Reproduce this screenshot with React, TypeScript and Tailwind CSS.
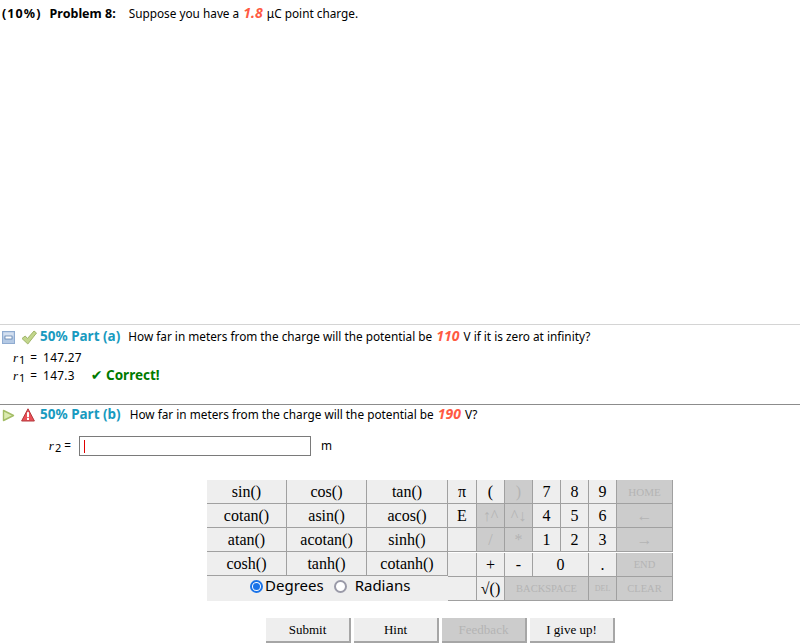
import React from "react";

const SANS = "font-['Noto_Sans','DejaVu_Sans',sans-serif]";
const SERIF = "font-['Liberation_Serif',serif]";

function Val({ children }: { children: React.ReactNode }) {
  return <b className="italic font-bold text-[14px] mx-[1px] text-[#ff5a43]">{children}</b>;
}

function Minus() {
  return (
    <svg width="13" height="13" viewBox="0 0 13 13" className="shrink-0">
      <rect x="0.5" y="0.5" width="12" height="12" fill="#b4c9e4" stroke="#8fabd0" />
      <rect x="1.5" y="1.5" width="10" height="4" fill="#d4e0f0" />
      <rect x="3" y="5" width="7" height="3" fill="#fff" stroke="#4f74a6" strokeWidth="0.7" />
    </svg>
  );
}

function Play() {
  return (
    <svg width="13" height="13" viewBox="0 0 13 13" className="shrink-0">
      <path d="M1.5 1.5 L11.5 6.5 L1.5 11.5 Z" fill="#dcebb0" stroke="#a3bd66" strokeWidth="1.4" strokeLinejoin="round" />
    </svg>
  );
}

function Check() {
  return (
    <svg width="16" height="15" viewBox="0 0 16 15" className="shrink-0">
      <path d="M1 8.5 L4.2 6 L6.5 8.5 L13 1 L15.5 3 L6.8 14 Z" fill="#c2d68c" stroke="#a0b56a" strokeWidth="1" strokeLinejoin="round" />
    </svg>
  );
}

function Warn() {
  return (
    <svg width="14" height="14" viewBox="0 0 14 14" className="shrink-0">
      <path d="M7 0.8 L13.4 13 L0.6 13 Z" fill="#ea5058" stroke="#b3383c" strokeWidth="1" strokeLinejoin="round" />
      <rect x="6" y="4.2" width="2" height="5" fill="#fff" />
      <rect x="6" y="10" width="2" height="2" fill="#fff" />
    </svg>
  );
}

function Rvar({ n }: { n: number }) {
  return (
    <span className={`${SERIF} text-[13px]`}>
      <i>r</i>
      <span className={`${SANS} text-[11px] ml-[1px] relative top-[2px]`}>{n}</span>
    </span>
  );
}

function Answer({ n, value }: { n: number; value: string }) {
  return (
    <span>
      <Rvar n={n} />
      <span className="ml-[5px]">=</span>
      <span className="ml-[6px] tracking-[0.3px]">{value}</span>
    </span>
  );
}

function Key({ label, off, size, span }: { label?: string; off?: boolean; size?: string; span?: string }) {
  return (
    <div
      className={`flex items-center justify-center border-r border-b border-[#a0a0a0] h-[24px] pt-[1px] ${SERIF} ${span ?? ""} ${off ? "bg-[#cccccc] text-[#b4b4b4]" : "bg-[#eeeeee] text-black"} ${size ?? "text-[16px]"}`}
    >
      {label}
    </div>
  );
}

function Btn({ label, off }: { label: string; off?: boolean }) {
  return (
    <div
      className={`w-[85px] h-[25px] flex items-center justify-center border-r-2 border-b-2 border-[#a6a6a6] ${SERIF} text-[13px] ${off ? "bg-[#cccccc] text-[#b4b4b4]" : "bg-[#eeeeee] text-black"}`}
    >
      {label}
    </div>
  );
}

export default function App() {
  const funcs = ["sin()", "cos()", "tan()", "cotan()", "asin()", "acos()", "atan()", "acotan()", "sinh()", "cosh()", "tanh()", "cotanh()"];

  return (
    <div className={`w-[800px] h-[643px] overflow-hidden bg-white text-[11.8px] text-black ${SANS}`}>
      <div className="h-[324px] pt-[5px] pl-[2px] leading-[17px] flex">
        <b className="text-[12.5px] tracking-[1.1px]">(10%)</b>
        <b className="ml-[8px] text-[12.5px]">Problem 8:</b>
        <span className="ml-[13px] -mt-[1px] whitespace-pre">Suppose you have a <Val>1.8</Val> μC point charge.</span>
      </div>

      <div className="h-[80px] border-t border-[#d4d4d4] pt-[3px]">
        <div className="flex items-center h-[18px] pl-[2px]">
          <Minus />
          <span className="ml-[6px] flex"><Check /></span>
          <b className="ml-[3px] pb-[2px] text-[13.5px] text-[#189ac0]">50% Part (a)</b>
          <span className="ml-[8px] pb-[4px]">How far in meters from the charge will the potential be <Val>110</Val> V if it is zero at infinity?</span>
        </div>
        <div className="pl-[13px] mt-[2px] h-[18px] leading-[18px]"><Answer n={1} value="147.27" /></div>
        <div className="pl-[13px] h-[18px] leading-[18px] flex">
          <Answer n={1} value="147.3" />
          <b className="ml-[16px] text-[13.5px] text-[#007a00] whitespace-pre"><span className="font-['DejaVu_Sans',sans-serif] text-[14px]">✔</span> Correct!</b>
        </div>
      </div>

      <div className="border-t border-[#8c8c8c] pt-[1px]">
        <div className="flex items-center h-[18px] pl-[2px]">
          <Play />
          <span className="ml-[6px] flex"><Warn /></span>
          <b className="ml-[5px] pb-[2px] text-[13.5px] text-[#189ac0]">50% Part (b)</b>
          <span className="ml-[9px] pb-[4px]">How far in meters from the charge will the potential be <Val>190</Val> V?</span>
        </div>
        <div className="flex items-center mt-[12px] h-[20px]">
          <span className="w-[79px] pr-[8px] text-right"><Rvar n={2} /> =</span>
          <div className="w-[232px] h-[20px] border border-[#7a7a7a] flex items-center pl-[4px]">
            <div className="w-[1px] h-[13px] bg-[#e00000]" />
          </div>
          <span className="ml-[10px]">m</span>
        </div>

        <div className="flex mt-[24px] ml-[207px]">
          <div className="w-[241px]">
            <div className="grid grid-cols-[80px_80px_81px]">
              {funcs.map((f) => (
                <Key key={f} label={f} />
              ))}
            </div>
            <div className="h-[25px] bg-[#eeeeee] flex items-center pl-[43px] pb-[6px] text-[15px]">
              <span className="w-[13px] h-[13px] mt-[2px] rounded-full border-2 border-[#1a73e8] bg-white flex items-center justify-center mr-[2px]">
                <span className="w-[7px] h-[7px] rounded-full bg-[#1a73e8]" />
              </span>
              Degrees
              <span className="w-[13px] h-[13px] mt-[2px] rounded-full border-2 border-[#9a9aa8] bg-white ml-[10px] mr-[8px]" />
              Radians
            </div>
          </div>
          <div className="grid grid-cols-[29px_28px_28px_28px_28px_28px_56px]">
            <Key label="π" />
            <Key label="(" />
            <Key label=")" off />
            <Key label="7" />
            <Key label="8" />
            <Key label="9" />
            <Key label="HOME" off size="text-[11px]" />

            <Key label="E" />
            <Key label="↑^" off />
            <Key label="^↓" off />
            <Key label="4" />
            <Key label="5" />
            <Key label="6" />
            <Key label="←" off />

            <Key />
            <Key label="/" off />
            <Key label="*" off />
            <Key label="1" />
            <Key label="2" />
            <Key label="3" />
            <Key label="→" off />

            <Key />
            <Key label="+" />
            <Key label="-" />
            <Key label="0" span="col-span-2" />
            <Key label="." />
            <Key label="END" off size="text-[10.5px]" />

            <Key />
            <Key label="√()" />
            <Key label="BACKSPACE" off size="text-[10.5px]" span="col-span-3" />
            <Key label="DEL" off size="text-[8px]" />
            <Key label="CLEAR" off size="text-[10.5px]" />
          </div>
        </div>

        <div className="flex gap-[3px] mt-[17px] ml-[266px]">
          <Btn label="Submit" />
          <Btn label="Hint" />
          <Btn label="Feedback" off />
          <Btn label="I give up!" />
        </div>
      </div>
    </div>
  );
}
